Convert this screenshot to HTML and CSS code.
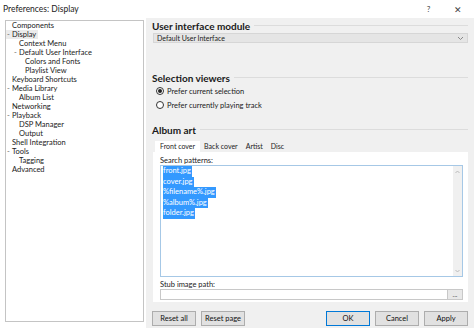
FILE: index.html
```html
<!DOCTYPE html>
<html lang="en">
<head>
    <meta charset="UTF-8">
    <title>Preferences: Display</title>
    <link rel="stylesheet" href="styles.css">
</head>
<body>
    <div class="window">
        <div class="titlebar">
            <span class="title">Preferences: Display</span>
            <span class="tb-btn">?</span>
            <span class="tb-btn close">&#x2715;</span>
        </div>

        <div class="main">
            <!-- Дерево разделов -->
            <ul class="tree">
                <li class="l0">Components</li>
                <li class="l0 open selected"><span class="exp">-</span>Display</li>
                <li class="l1">Context Menu</li>
                <li class="l1 open"><span class="exp">-</span>Default User Interface</li>
                <li class="l2">Colors and Fonts</li>
                <li class="l2">Playlist View</li>
                <li class="l0">Keyboard Shortcuts</li>
                <li class="l0 open"><span class="exp">-</span>Media Library</li>
                <li class="l1">Album List</li>
                <li class="l0">Networking</li>
                <li class="l0 open"><span class="exp">-</span>Playback</li>
                <li class="l1">DSP Manager</li>
                <li class="l1">Output</li>
                <li class="l0">Shell Integration</li>
                <li class="l0 open"><span class="exp">-</span>Tools</li>
                <li class="l1">Tagging</li>
                <li class="l0">Advanced</li>
            </ul>

            <div class="pane">
                <div class="page">
                    <div class="group-title">User interface module</div>
                    <div class="select">
                        <span>Default User Interface</span>
                        <svg class="chev" width="7" height="5" viewBox="0 0 7 5"><path d="M1 1 L3.5 3.5 L6 1" fill="none" stroke="#888" stroke-width="1"/></svg>
                    </div>

                    <div class="group-title viewers">Selection viewers</div>
                    <label class="radio"><span class="dot checked"></span>Prefer current selection</label>
                    <label class="radio"><span class="dot"></span>Prefer currently playing track</label>

                    <div class="group-title art">Album art</div>
                    <div class="tabs">
                        <span class="tab active">Front cover</span>
                        <span class="tab">Back cover</span>
                        <span class="tab">Artist</span>
                        <span class="tab">Disc</span>
                    </div>
                    <div class="tab-panel">
                        <div class="field-label">Search patterns:</div>
                        <div class="textarea">
                            <div class="lines">
                                <span class="sel">front.jpg</span>
                                <span class="sel">cover.jpg</span>
                                <span class="sel">%filename%.jpg</span>
                                <span class="sel">%album%.jpg</span>
                                <span class="sel">folder.jpg</span>
                            </div>
                            <div class="scrollbar">
                                <svg width="5" height="4" viewBox="0 0 5 4"><path d="M0.5 3 L2.5 1 L4.5 3" fill="none" stroke="#bbb"/></svg>
                                <svg width="5" height="4" viewBox="0 0 5 4"><path d="M0.5 1 L2.5 3 L4.5 1" fill="none" stroke="#bbb"/></svg>
                            </div>
                        </div>
                        <div class="field-label stub">Stub image path:</div>
                        <div class="path-row">
                            <div class="input"></div>
                            <span class="browse">...</span>
                        </div>
                    </div>
                </div>

                <div class="buttons">
                    <button class="btn">Reset all</button>
                    <button class="btn">Reset page</button>
                    <span class="spacer"></span>
                    <button class="btn default">OK</button>
                    <button class="btn">Cancel</button>
                    <button class="btn">Apply</button>
                </div>
            </div>
        </div>
    </div>
</body>
</html>
```

FILE: styles.css
```css
:root {
    --pane-bg: #f0f0f0;
    --btn-bg: #e1e1e1;
    --btn-border: #adadad;
    --accent: #0078d7;
    --select-bg: #3399ff;
}

* {
    box-sizing: border-box;
    margin: 0;
    padding: 0;
}

body {
    width: 474px;
    height: 331px;
    overflow: hidden;
    background: white;
    font-family: Lato, 'Open Sans', sans-serif;
    font-size: 7.5px;
    color: #1a1a1a;
}

.window {
    width: 474px;
    height: 331px;
    display: flex;
    flex-direction: column;
}

.titlebar {
    height: 18px;
    display: flex;
    align-items: center;
    padding-left: 3px;
}

.title {
    flex: 1;
    font-size: 8.5px;
    color: #222;
}

.tb-btn {
    width: 29px;
    text-align: center;
    font-size: 8px;
    color: #444;
}

.tb-btn.close {
    font-size: 9px;
    margin-right: 2px;
}

.main {
    display: flex;
    flex: 1;
    align-items: flex-start;
}

/* Дерево */
.tree {
    list-style: none;
    margin: 2px 2px 0 5px;
    width: 139px;
    height: 302px;
    border: 1px solid #c4c4c4;
}

.tree li {
    height: 9px;
    line-height: 9px;
    white-space: nowrap;
    position: relative;
}

.tree .l0 { padding-left: 6px; }
.tree .l1 { padding-left: 13px; }
.tree .l2 { padding-left: 19px; }

.tree .exp {
    position: absolute;
    margin-left: -5px;
    color: #666;
}

.tree .selected {
    background: #ebebeb;
    margin-right: 105px;
}

/* Правая часть */
.pane {
    flex: 1;
    height: 310px;
    background: var(--pane-bg);
    display: flex;
    flex-direction: column;
}

.page {
    padding: 2px 6px 0 6px;
    flex: 1;
}

.group-title {
    display: flex;
    align-items: center;
    gap: 4px;
    font-size: 10px;
    font-weight: 700;
    height: 11px;
}

.group-title::after {
    content: "";
    flex: 1;
    height: 1px;
    background: #dcdcdc;
}

.select {
    margin: 2px 0 0 1px;
    height: 10px;
    background: #e5e5e5;
    border: 1px solid #d6d6d6;
    display: flex;
    align-items: center;
    justify-content: space-between;
    padding: 0 3px;
    font-size: 7px;
}

.viewers {
    margin-top: 29px;
}

.radio {
    display: flex;
    align-items: center;
    gap: 3px;
    height: 14px;
    font-size: 7.5px;
    padding-left: 4px;
}

.radio:first-of-type {
    margin-top: 1px;
}

.dot {
    width: 8px;
    height: 8px;
    border: 1px solid #333;
    border-radius: 50%;
    background: white;
    display: flex;
    align-items: center;
    justify-content: center;
}

.dot.checked::after {
    content: "";
    width: 4px;
    height: 4px;
    border-radius: 50%;
    background: #222;
}

.art {
    margin-top: 12px;
}

.tabs {
    display: flex;
    margin: 6px 0 0 3px;
    height: 11px;
}

.tab {
    padding: 0 4px;
    line-height: 11px;
    font-size: 7px;
    color: #222;
}

.tab.active {
    background: white;
    padding: 0 5px;
}

.tab-panel {
    margin-left: 1px;
    background: white;
    height: 150px;
    padding: 4px 5px 0 7px;
}

.field-label {
    font-size: 7.5px;
    height: 9px;
    line-height: 9px;
}

.textarea {
    height: 112px;
    border: 1px solid #a6c8e6;
    display: flex;
}

.lines {
    flex: 1;
    display: flex;
    flex-direction: column;
    align-items: flex-start;
    padding: 0 0 0 2px;
}

.sel {
    background: var(--select-bg);
    color: white;
    font-size: 7.5px;
    line-height: 10.5px;
    padding-right: 1px;
}

.scrollbar {
    width: 9px;
    background: #f0f0f0;
    display: flex;
    flex-direction: column;
    justify-content: space-between;
    align-items: center;
    padding: 4px 0 3px;
}

.stub {
    margin-top: 3px;
}

.path-row {
    display: flex;
    height: 11px;
}

.input {
    flex: 1;
    border: 1px solid #c8c8c8;
    border-right: none;
}

.browse {
    width: 16px;
    border: 1px solid #c8c8c8;
    background: #e8e8e8;
    color: #555;
    font-size: 7px;
    text-align: center;
    line-height: 9px;
}

/* Кнопки */
.buttons {
    display: flex;
    gap: 5px;
    padding: 0 6px 1px 6px;
    height: 17px;
}

.btn {
    width: 44px;
    height: 15px;
    background: var(--btn-bg);
    border: 1px solid var(--btn-border);
    font-family: inherit;
    font-size: 7.5px;
    color: #111;
}

.btn.default {
    border-color: var(--accent);
}

.spacer {
    flex: 1;
}
```
